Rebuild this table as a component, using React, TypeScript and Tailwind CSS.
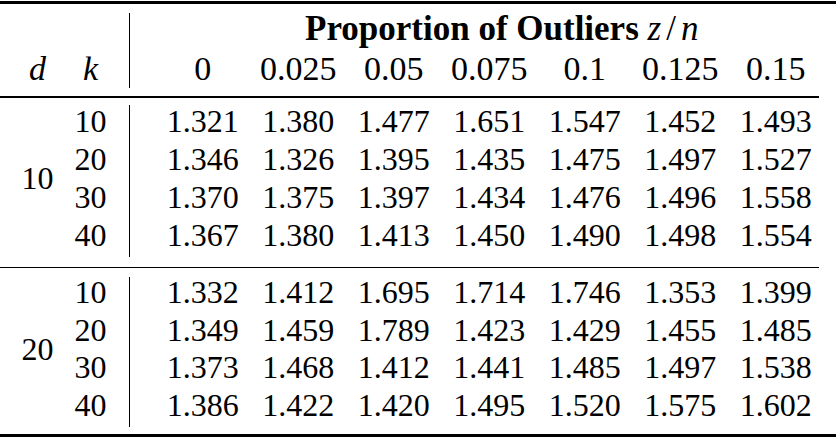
const cols = ["0", "0.025", "0.05", "0.075", "0.1", "0.125", "0.15"];

const groups: { d: string; rowH: string; pad: string; rows: { k: string; vals: string[] }[] }[] = [
  {
    d: "10",
    rowH: "h-[38px] leading-[38px]",
    pad: "pt-[4.5px] pb-[12.5px]",
    rows: [
      { k: "10", vals: ["1.321", "1.380", "1.477", "1.651", "1.547", "1.452", "1.493"] },
      { k: "20", vals: ["1.346", "1.326", "1.395", "1.435", "1.475", "1.497", "1.527"] },
      { k: "30", vals: ["1.370", "1.375", "1.397", "1.434", "1.476", "1.496", "1.558"] },
      { k: "40", vals: ["1.367", "1.380", "1.413", "1.450", "1.490", "1.498", "1.554"] },
    ],
  },
  {
    d: "20",
    rowH: "h-[37.5px] leading-[37.5px]",
    pad: "pt-[6px] pb-[9.5px]",
    rows: [
      { k: "10", vals: ["1.332", "1.412", "1.695", "1.714", "1.746", "1.353", "1.399"] },
      { k: "20", vals: ["1.349", "1.459", "1.789", "1.423", "1.429", "1.455", "1.485"] },
      { k: "30", vals: ["1.373", "1.468", "1.412", "1.441", "1.485", "1.497", "1.538"] },
      { k: "40", vals: ["1.386", "1.422", "1.420", "1.495", "1.520", "1.575", "1.602"] },
    ],
  },
];

function Group({ g }: { g: (typeof groups)[number] }) {
  return (
    <div className={`flex ${g.pad}`}>
      <div className="w-[75px] flex items-center justify-center">{g.d}</div>
      <div className="w-[31px] flex flex-col items-center">
        {g.rows.map((r) => (
          <div key={r.k} className={g.rowH}>{r.k}</div>
        ))}
      </div>
      <div className="w-[23px]" />
      <div className="w-px bg-black mt-[3px] -mb-[3px]" />
      <div className="pl-[25px] grid grid-cols-[repeat(7,95.5px)]">
        {g.rows.map((r) =>
          r.vals.map((v, i) => (
            <div key={r.k + "-" + i} className={`${g.rowH} text-center`}>{v}</div>
          ))
        )}
      </div>
    </div>
  );
}

export default function App() {
  return (
    <div className="w-[839px] h-[440px] bg-white text-black text-[32px] overflow-hidden">
      <div className="font-['Liberation_Serif',serif]">
        <div className="pt-[1px]">
          <div className="w-[836px] h-[3px] bg-black" />
        </div>

        {/* header */}
        <div className="flex pt-[5px] pb-[7px]">
          <div className="w-[75px] flex flex-col">
            <div className="h-[39px]" />
            <div className="h-[41px] leading-[41px] text-[34px] text-center italic">d</div>
          </div>
          <div className="w-[31px] flex flex-col">
            <div className="h-[39px]" />
            <div className="h-[41px] leading-[41px] text-[34px] text-center italic">k</div>
          </div>
          <div className="w-[23px]" />
          <div className="w-px bg-black mt-[4px] mb-[1px]" />
          <div className="flex flex-col">
            <div className="h-[39px] leading-[39px] text-[35px] pl-[175px] whitespace-nowrap">
              <span className="font-bold">Proportion of Outliers</span>{" "}
              <span className="italic">z</span>
              <span className="mx-[5px]">/</span>
              <span className="italic">n</span>
            </div>
            <div className="pl-[25px] grid grid-cols-[repeat(7,95.5px)] h-[41px] leading-[41px] text-[34px]">
              {cols.map((c) => (
                <div key={c} className="text-center">{c}</div>
              ))}
            </div>
          </div>
        </div>

        <div className="w-[819px] h-[1.5px] bg-black" />
        <Group g={groups[0]} />
        <div className="w-[819px] h-[1.5px] bg-black" />
        <Group g={groups[1]} />
        <div className="w-[836px] h-[3px] bg-black" />
      </div>
    </div>
  );
}
